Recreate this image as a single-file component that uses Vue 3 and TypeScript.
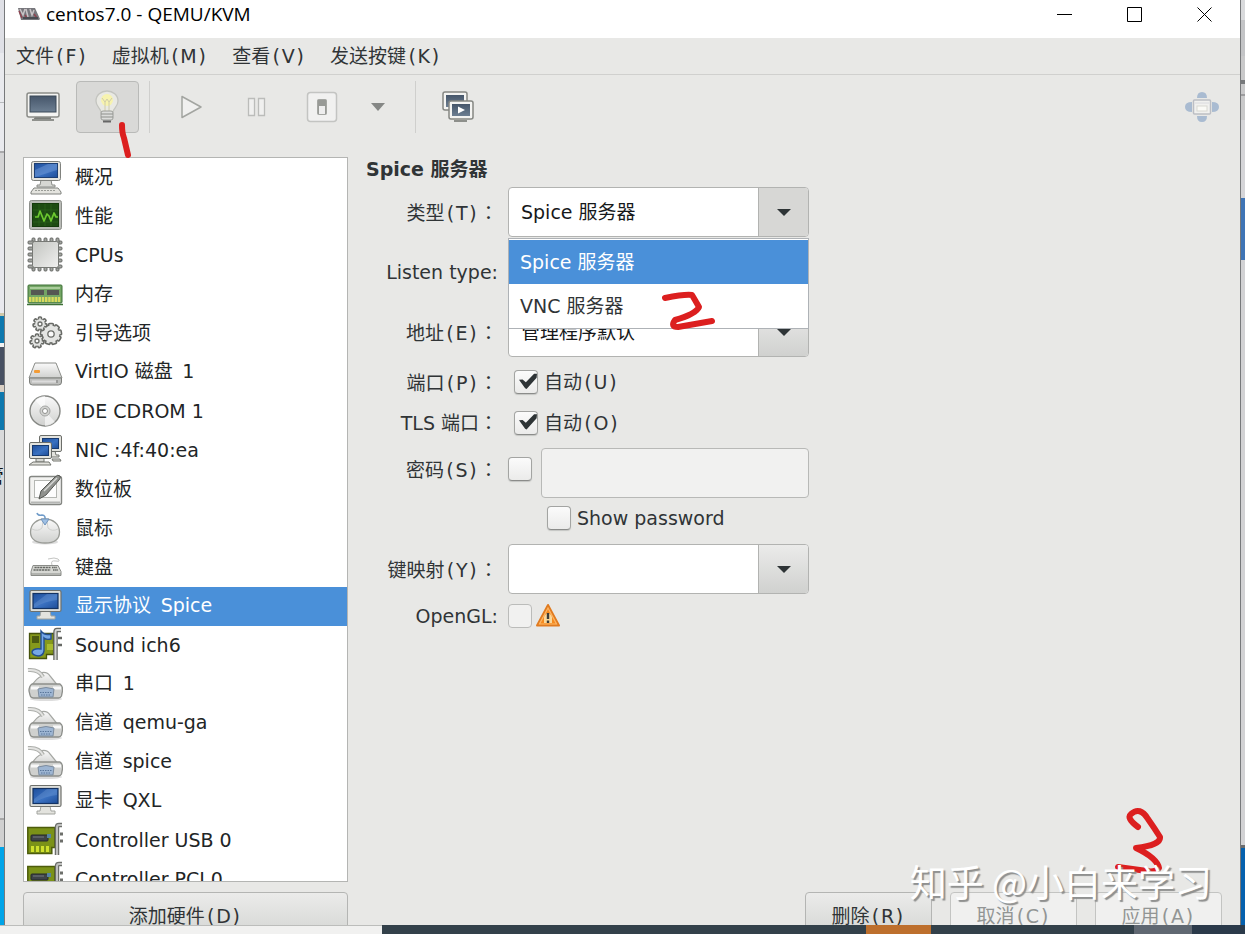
<script setup lang="ts">
import { h, ref } from 'vue'

interface Device {
  icon: string
  label: string
}

const PUNCT = /([()：]|(?<=[\u4e00-\u9fff]) )/

/** Sets brackets, wide colons and the space after Han text in their own faces. */
const Caption = (props: { text: string }) =>
  h(
    'span',
    { class: 'caption' },
    props.text
      .split(PUNCT)
      .filter((part) => part !== '')
      .map((part) => {
        if (part === '：') return h('span', { class: 'caption-colon' }, part)
        if (part === ' ') return h('span', { class: 'caption-space' }, part)
        if (part === '(' || part === ')') return h('span', { class: 'caption-mono' }, part)
        return part
      }),
  )
Caption.props = ['text']

const menus = ['文件(F)', '虚拟机(M)', '查看(V)', '发送按键(K)']

const devices: Device[] = [
  { icon: 'computer', label: '概况' },
  { icon: 'performance', label: '性能' },
  { icon: 'cpu', label: 'CPUs' },
  { icon: 'memory', label: '内存' },
  { icon: 'gears', label: '引导选项' },
  { icon: 'disk', label: 'VirtIO 磁盘 1' },
  { icon: 'cd', label: 'IDE CDROM 1' },
  { icon: 'nic', label: 'NIC :4f:40:ea' },
  { icon: 'tablet', label: '数位板' },
  { icon: 'mouse', label: '鼠标' },
  { icon: 'keyboard', label: '键盘' },
  { icon: 'display', label: '显示协议 Spice' },
  { icon: 'sound', label: 'Sound ich6' },
  { icon: 'serial', label: '串口 1' },
  { icon: 'serial', label: '信道 qemu-ga' },
  { icon: 'serial', label: '信道 spice' },
  { icon: 'display', label: '显卡 QXL' },
  { icon: 'card', label: 'Controller USB 0' },
  { icon: 'card', label: 'Controller PCI 0' },
]

const selected = ref(11)
const serverType = ref('Spice 服务器')
const serverTypes = ['Spice 服务器', 'VNC 服务器']
const address = ref('管理程序默认')
const keymap = ref('')
const password = ref('')
const autoPort = ref(true)
const autoTls = ref(true)
const usePassword = ref(false)
const showPassword = ref(false)
const openGl = ref(false)

function gear(cx: number, cy: number, r: number, teeth: number): string {
  let rects = ''
  for (let i = 0; i < teeth; i++) {
    rects += `<rect x="${cx - r / 4}" y="${cy - r - 1}" width="${r / 2}" height="${r}" rx="1" transform="rotate(${(i * 360) / teeth} ${cx} ${cy})"/>`
  }
  return `<g fill="#e4e5e3" stroke="#686a66" stroke-width="1.6">${rects}</g>
    <circle cx="${cx}" cy="${cy}" r="${r - 1.2}" fill="#e4e5e3"/>
    <circle cx="${cx}" cy="${cy}" r="${r / 3}" fill="#fafafa" stroke="#6c6e6a" stroke-width="1.3"/>`
}

function pins(): string {
  let out = ''
  for (let i = 0; i < 5; i++) {
    const p = 5 + i * 6
    out += `<rect x="${p}" y="2" width="3" height="6" rx="1"/><rect x="${p}" y="29" width="3" height="6" rx="1"/>`
    out += `<rect x="1" y="${p}" width="6" height="3" rx="1"/><rect x="29" y="${p}" width="6" height="3" rx="1"/>`
  }
  return out
}

const icons: Record<string, string> = {
  computer: `<path d="M14 22h10l1 5h3v2H10v-2h3z" fill="#d6d7d3" stroke="#8a8c88"/>
    <rect x="4.500" y="3.500" width="29" height="19" rx="2" fill="#e3e3de" stroke="#80827e"/>
    <rect x="7.500" y="5.500" width="23" height="14" fill="url(#g-screen)" stroke="#1d3f73"/>
    <path d="M8 12l13-6h9v6q-9 3-22 7z" fill="#7fa6dc" opacity=".4"/>
    <path d="M7 30h24l3 4v2H4v-2z" fill="#e4e4df" stroke="#80827e"/><path d="M8 32.500h21" stroke="#9b9d98" stroke-dasharray="2 1"/>`,
  performance: `<rect x="2.500" y="3.500" width="32" height="29" rx="2" fill="#b9bbb6" stroke="#8d8f8b"/>
    <rect x="5.500" y="6.500" width="26" height="23" fill="#1d4b12" stroke="#143a0b"/>
    <path d="M6 13h25M6 19h25M6 25h25M12 7v22M18 7v22M24 7v22" stroke="#2f6a20" stroke-width=".6"/>
    <path d="M8 20h3l2-6 4 10 3-7 2 2 2 5 3-8 2 4h2" fill="none" stroke="#6cc82f" stroke-width="1.700" stroke-linejoin="round"/>`,
  cpu: `<g fill="#a4a6a2" stroke="#5f615d" stroke-width=".9">${pins()}</g>
    <rect x="5.500" y="5.500" width="26" height="26" rx="2" fill="url(#g-chip)" stroke="#777975"/>`,
  memory: `<rect x="1" y="10" width="34" height="18" rx="1" fill="#73a565" stroke="#3e7137"/>
    <rect x="3" y="12" width="30" height="2" fill="#a9cc9a"/>
    <rect x="4" y="15" width="13" height="5" fill="#555753"/><rect x="20" y="15" width="12" height="5" fill="#555753"/>
    <path d="M2 24.500h32" stroke="#d8da5c" stroke-width="5" stroke-dasharray="2.400 .800"/>
    <path d="M0 29.500h36" stroke="#3e7137" stroke-width="1.500"/>`,
  gears: gear(24, 20, 9.5, 9) + gear(13, 10, 6, 7) + gear(10, 27, 6, 7),
  disk: `<path d="M8 10h21l6 15H2z" fill="url(#g-metal)" stroke="#8b8d89"/>
    <path d="M2.500 25h32v4q0 3-3 3h-26q-3 0-3-3z" fill="#bfc0be" stroke="#7d7f7b"/>
    <path d="M5 28.500h24" stroke="#dcdcdc" stroke-width="2"/><rect x="7" y="17" width="6" height="3" rx="1" fill="#f39c36"/><path d="M30 27v3" stroke="#777"/>`,
  cd: `<circle cx="18" cy="19" r="15" fill="url(#g-metal)" stroke="#858783" stroke-width="1.400"/>
    <path d="M18 19L8 8q5-4 10-4zM18 19l10 11q-5 4-10 4z" fill="#fff" opacity=".6"/>
    <circle cx="18" cy="19" r="5" fill="#d3d4d2" stroke="#a5a6a4"/><circle cx="18" cy="19" r="2.500" fill="#fff" stroke="#8e908c"/>`,
  nic: `<path d="M20 20h8l1 4h3v2H18z" fill="#e3e3de" stroke="#73756f"/>
    <rect x="12.500" y="4.500" width="22" height="16" rx="1.500" fill="#e3e3de" stroke="#6c6e6a"/>
    <rect x="15.500" y="7.500" width="16" height="10" fill="url(#g-screen)" stroke="#173a70"/>
    <path d="M9 27h8v4H9z" fill="#d6d7d3" stroke="#73756f"/><path d="M6 31h16l2 3H2z" fill="#e3e3de" stroke="#73756f"/>
    <rect x="2.500" y="11.500" width="22" height="16" rx="1.500" fill="#e3e3de" stroke="#6c6e6a"/>
    <rect x="5.500" y="14.500" width="16" height="10" fill="url(#g-screen)" stroke="#173a70"/><path d="M25 28h8l1 2h-8z" fill="#e3e3de" stroke="#73756f"/>`,
  tablet: `<rect x="2.500" y="6.500" width="32" height="28" rx="2" fill="#f2f2f0" stroke="#858783" stroke-width="1.400"/>
    <rect x="7.500" y="10.500" width="22" height="17" fill="#fdfdfd" stroke="#b5b7b3"/>
    <path d="M4 32.500h29" stroke="#b5b6b4" stroke-width="2"/>
    <path d="M12 29l2-8L28 7q3-3 5-1 1 2-1 4L19 25z" fill="#8f918d" stroke="#555753"/><path d="M17 21L30 8" stroke="#d8d9d7" stroke-width="1.500"/>`,
  mouse: `<path d="M10 4q1 3 5 2 4 0 3 6" fill="none" stroke="#6f9bc9" stroke-width="1.600"/>
    <ellipse cx="18" cy="33" rx="13" ry="2.500" fill="#bbb" opacity=".5"/>
    <path d="M18 10c8 0 14.500 5 14.500 13S26 34 18 34 3.500 31 3.500 23 10 10 18 10z" fill="url(#g-metal)" stroke="#9b9d98" stroke-width="1.300"/>
    <path d="M5 20q6 3 10-1l1-7M31 20q-6 3-10-1l-1-7" fill="none" stroke="#d0d1cf"/>
    <path d="M14 10l4 6 4-6z" fill="#9fc0e4" stroke="#6f93bd"/>`,
  keyboard: `<path d="M25 17q-2-5 4-4 5 1 2-2-3-2-10 0" fill="none" stroke="#c4c5c3"/>
    <path d="M6 17.500h25l3 6v4H4v-4z" fill="#d6d7d3" stroke="#8a8c88"/>
    <path d="M7.500 19.500h16M6.500 22h17" stroke="#666864" stroke-width="1.600" stroke-dasharray="2.200 .6"/><path d="M25 19.500h5M26 22h5" stroke="#666864" stroke-width="1.600" stroke-dasharray="1.600 .5"/><path d="M4 26h30" stroke="#8d8f8b"/>`,
  display: `<path d="M14 24h9l1 5h4v3H10v-3h3z" fill="#e3e3de" stroke="#a2a49f"/>
    <rect x="3" y="3.500" width="31" height="21" rx="1.500" fill="#dddeda" stroke="#6e706c" stroke-width="1.200"/>
    <rect x="6" y="6.500" width="25" height="15" fill="url(#g-screen)" stroke="#133263" stroke-width="1.200"/>
    <path d="M7 17L20 7h10v6q-12 1-23 8z" fill="#7fa6dc" opacity=".3"/>`,
  sound: `<path d="M2.500 7.500h24v21h-7v4h-17z" fill="#86991c" stroke="#46520c" stroke-width="1.300"/>
    <rect x="5" y="10" width="7" height="7" fill="#4c5a12"/><path d="M20 21h6" stroke="#a9bb30" stroke-width="6"/>
    <path d="M14 5q4 5 10 3v5q-5 1-7-1v13q-1 5-6 5-6-1-6-4 1-4 9-3z" fill="#75a7e6" stroke="#244f91" stroke-width="1.400"/>
    <path d="M34 4h-4q-1.500 0-1.500 2v28" fill="none" stroke="#666864" stroke-width="4.500"/><path d="M34 4h-4q-1.500 0-1.500 2v28" fill="none" stroke="#d2d3d1" stroke-width="2"/>
    <path d="M31 12h4M31 19h4" stroke="#666864" stroke-width="2.500"/>`,
  serial: `<ellipse cx="19" cy="34" rx="16" ry="2" fill="#aaa" opacity=".4"/>
    <path d="M13 8q7-2 10 3l9 11H4q5-9 11-11z" fill="url(#g-metal)" stroke="#a5a7a3" stroke-width="1.300"/>
    <path d="M1 5q11-1 15 7" fill="none" stroke="#adafab" stroke-width="4"/><path d="M1 5q11-1 15 7" fill="none" stroke="#e3e3e1" stroke-width="2"/>
    <path d="M5 19h28q3 2 2.500 7l-1 5q-1 2-3 2h-25q-3 0-3.500-3l-1-4q0-5 3-7z" fill="#cfd0ce" stroke="#8d8f8b" stroke-width="1.300"/>
    <path d="M4 23h8M26 23h8" stroke="#f8f8f8" stroke-width="3"/><path d="M11 24q8-3 16 0l-1 8H12z" fill="#9db5d2" stroke="#7d8c9e"/>
    <path d="M13 27.500h12M14 30h10" stroke="#5a769a" stroke-dasharray="1.500 1"/>`,
  card: `<path d="M.8 6.500h27v20h-3v6H.8z" fill="#7b9218" stroke="#4d5c0b" stroke-width="1.500"/>
    <rect x="4" y="14" width="17" height="6" rx="1" fill="#3e4347" stroke="#24282b"/><path d="M6 16h11" stroke="#747b80"/><rect x="20" y="13" width="4" height="4" fill="#5684a0"/>
    <path d="M4 28h18" stroke="#cfe02c" stroke-width="6" stroke-dasharray="3 2"/>
    <path d="M35 4h-3q-2 0-2 2v28" fill="none" stroke="#6d6f6b" stroke-width="4.500"/><path d="M35 4h-3q-2 0-2 2v28" fill="none" stroke="#bfc0be" stroke-width="2"/>
    <path d="M33 13h3M33 20h3" stroke="#6d6f6b" stroke-width="3"/>`,
}
</script>

<template>
  <div class="desktop">
    <svg class="defs" width="0" height="0" aria-hidden="true">
      <defs>
        <linearGradient id="g-screen" x1="0" y1="0" x2="1" y2="1">
          <stop offset="0" stop-color="#1f4f9c" /><stop offset=".55" stop-color="#3a71c1" /><stop offset="1" stop-color="#1e4d98" />
        </linearGradient>
        <linearGradient id="g-slate" x1="0" y1="0" x2="0" y2="1">
          <stop offset="0" stop-color="#46566a" /><stop offset="1" stop-color="#6d7f92" />
        </linearGradient>
        <linearGradient id="g-chip" x1="0" y1="0" x2="1" y2="1">
          <stop offset="0" stop-color="#c2c4c0" /><stop offset="1" stop-color="#f0f0ef" />
        </linearGradient>
        <linearGradient id="g-metal" x1="0" y1="0" x2="0" y2="1">
          <stop offset="0" stop-color="#fafafa" /><stop offset="1" stop-color="#cfd0ce" />
        </linearGradient>
      </defs>
    </svg>

    <div class="edge edge-left"><span class="edge-text" aria-hidden="true">管</span></div>

    <main class="window">
      <header class="titlebar">
        <svg class="app-icon" viewBox="0 0 24 15" aria-hidden="true">
          <path d="M1 1h17l5 11-1 1H4z" fill="#77777c" />
          <path d="M3 2l3 6 2-6M9 2l2 8M13 2l2 6 2-5" stroke="#c9c3c6" stroke-width="1.500" fill="none" />
          <path d="M2 4l3 7M8 8l2 3M17 7l3 4" stroke="#8e4451" stroke-width="1.500" />
          <path d="M6 11h15" stroke="#4a4c52" stroke-width="2" />
        </svg>
        <h1>centos7.0 - QEMU/KVM</h1>
        <button type="button" class="caption-btn" aria-label="最小化">
          <svg viewBox="0 0 16 16"><path d="M0 7.500h15" /></svg>
        </button>
        <button type="button" class="caption-btn" aria-label="最大化">
          <svg viewBox="0 0 16 16"><path d="M.5.500h14v14H.5z" /></svg>
        </button>
        <button type="button" class="caption-btn" aria-label="关闭">
          <svg viewBox="0 0 16 16"><path d="M.5.500l14 14M14.500.5l-14 14" /></svg>
        </button>
      </header>

      <nav class="menubar">
        <button v-for="m in menus" :key="m" type="button"><Caption :text="m" /></button>
      </nav>

      <div class="toolbar">
        <button type="button" aria-label="控制台">
          <svg width="36" height="32" viewBox="0 0 36 32">
            <path d="M10 26h16v3H8z" fill="#7b7d79" />
            <rect x="2" y="2" width="32" height="24" rx="2" fill="#f4f4f2" stroke="#8a8c88" stroke-width="1.500" />
            <rect x="5" y="5" width="26" height="16" fill="url(#g-slate)" stroke="#3b4856" /><path d="M7 29h22" stroke="#8f918d" stroke-width="2" />
          </svg>
        </button>
        <button type="button" class="pressed" aria-label="详情">
          <svg width="30" height="36" viewBox="0 0 30 36">
            <path d="M14 2c6 0 11 4 11 10s-4 6-5 11H8C7 18 3 18 3 12S8 2 14 2z" fill="#e9e9e3" stroke="#c3c4bf" stroke-width="1.300" />
            <circle cx="14" cy="11" r="6" fill="#f7f3ae" /><path d="M9 9l3 4 2-3 2 3 3-4M12 13v9M16 13v9" fill="none" stroke="#cfccaa" />
            <rect x="8" y="22" width="12" height="9" rx="2" fill="#dcdddb" stroke="#9c9e9a" /><path d="M8 25h12M8 28h12" stroke="#8d8f8b" /><path d="M10 32.500h8" stroke="#666" stroke-width="2" />
          </svg>
          <svg class="mark mark-one" viewBox="0 0 16 40" aria-hidden="true">
            <path d="M5 5q0 8 2 13l4 17" />
          </svg>
        </button>
        <span class="sep"></span>
        <button type="button" disabled aria-label="运行">
          <svg width="26" height="26" viewBox="0 0 26 26"><path d="M3 2.500L22 13 3 23.500z" fill="#f0f0ef" stroke="#a3a5a1" stroke-width="1.500" stroke-linejoin="round" /></svg>
        </button>
        <button type="button" disabled aria-label="暂停">
          <svg width="22" height="22" viewBox="0 0 22 22"><path d="M2.500 2.500h6v17h-6zM12.500 2.500h6v17h-6z" fill="#f0f0ef" stroke="#bbbcba" stroke-width="1.300" /></svg>
        </button>
        <button type="button" disabled aria-label="关机">
          <svg width="32" height="32" viewBox="0 0 32 32">
            <rect x="1.500" y="1.500" width="29" height="29" rx="3" fill="#f1f1f0" stroke="#c3c4c2" stroke-width="1.500" />
            <rect x="11.500" y="8.500" width="9" height="15" rx="1" fill="#989a96" stroke="#a5a7a3" /><rect x="13" y="15" width="6" height="8" fill="#eee" />
          </svg>
        </button>
        <button type="button" class="narrow" aria-label="更多关机选项">
          <svg width="16" height="10" viewBox="0 0 16 10"><path d="M1 1h14L8 9z" fill="#858785" /></svg>
        </button>
        <span class="sep"></span>
        <button type="button" aria-label="快照">
          <svg width="34" height="34" viewBox="0 0 34 34">
            <rect x="2" y="2" width="24" height="18" rx="2" fill="#f4f4f2" stroke="#858783" stroke-width="1.500" /><rect x="5" y="5" width="18" height="12" fill="url(#g-slate)" />
            <path d="M13 30h13v2H13z" fill="#8d8f8b" />
            <rect x="8" y="11" width="24" height="18" rx="2" fill="#f4f4f2" stroke="#858783" stroke-width="1.500" /><rect x="11" y="14" width="18" height="12" fill="url(#g-slate)" />
            <path d="M17 16.500l7 3.500-7 3.500z" fill="#fff" />
          </svg>
        </button>
        <span class="grow"></span>
        <button type="button" disabled aria-label="全屏">
          <svg width="36" height="34" viewBox="0 0 36 34">
            <g fill="#a9bbd1"><path d="M13 8q0-6 5-6t5 6zM13 26q0 6 5 6t5-6zM8 12q-7 0-7 5t7 5zM28 12q7 0 7 5t-7 5z" /></g>
            <rect x="9.500" y="10" width="17" height="14" rx="1" fill="#f1f1ef" stroke="#bcbec4" stroke-width="1.500" /><path d="M11 13h14" stroke="#d9dade" /><rect x="13" y="16" width="10" height="5" fill="#fafaf6" stroke="#d8d8d2" />
          </svg>
        </button>
      </div>

      <section class="content">
        <ul class="devices">
          <li v-for="(d, i) in devices" :key="d.label">
            <button type="button" :class="{ active: i === selected }" @click="selected = i">
              <svg class="dev-icon" viewBox="0 0 36 39" aria-hidden="true" v-html="icons[d.icon]"></svg>
              <span class="dev-label"><Caption :text="d.label" /></span>
            </button>
          </li>
        </ul>

        <form class="details" @submit.prevent>
          <h2>Spice 服务器</h2>
          <div class="grid">
            <label class="name" for="f-type"><Caption text="类型(T)：" /></label>
            <div class="field">
              <div class="combo open">
                <select id="f-type" v-model="serverType">
                  <option v-for="t in serverTypes" :key="t">{{ t }}</option>
                </select>
                <span class="arrow"><svg viewBox="0 0 16 9"><path d="M1 1h14L8 8z" /></svg></span>
              </div>
              <div class="popup">
                <button
                  v-for="t in serverTypes"
                  :key="t"
                  type="button"
                  :class="{ active: t === serverType }"
                  @click="serverType = t"
                >{{ t }}</button>
                <svg class="mark mark-two" viewBox="0 0 58 42" aria-hidden="true">
                  <path d="M5 8q20-4 27-3 3 5 7 12-3 7-24 13-5 7 3 7l34-6" />
                </svg>
              </div>
            </div>

            <label class="name" for="f-listen">Listen type:</label>
            <div class="combo">
              <select id="f-listen"><option></option></select>
              <span class="arrow"><svg viewBox="0 0 16 9"><path d="M1 1h14L8 8z" /></svg></span>
            </div>

            <label class="name" for="f-address"><Caption text="地址(E)：" /></label>
            <div class="combo">
              <select id="f-address" v-model="address"><option>管理程序默认</option></select>
              <span class="arrow"><svg viewBox="0 0 16 9"><path d="M1 1h14L8 8z" /></svg></span>
            </div>

            <span class="name"><Caption text="端口(P)：" /></span>
            <label class="check indent"><input v-model="autoPort" type="checkbox" /><Caption text="自动(U)" /></label>

            <span class="name"><Caption text="TLS 端口：" /></span>
            <label class="check indent"><input v-model="autoTls" type="checkbox" /><Caption text="自动(O)" /></label>

            <label class="name name-top" for="f-usepw"><Caption text="密码(S)：" /></label>
            <div class="password">
              <input id="f-usepw" v-model="usePassword" type="checkbox" />
              <input v-model="password" class="entry" type="password" aria-label="密码" :disabled="!usePassword" />
              <label class="check indent show"><input v-model="showPassword" type="checkbox" />Show password</label>
            </div>

            <label class="name" for="f-keymap"><Caption text="键映射(Y)：" /></label>
            <div class="combo">
              <select id="f-keymap" v-model="keymap"><option value=""></option></select>
              <span class="arrow"><svg viewBox="0 0 16 9"><path d="M1 1h14L8 8z" /></svg></span>
            </div>

            <label class="name" for="f-gl">OpenGL:</label>
            <div class="gl">
              <input id="f-gl" v-model="openGl" type="checkbox" disabled />
              <svg width="26" height="26" viewBox="0 0 26 26" role="img" aria-label="警告">
                <path d="M13 2L24 22.500H2z" fill="#f58a1f" stroke="#e07b20" stroke-width="2" stroke-linejoin="round" />
                <path d="M13 5l8.500 16h-17z" fill="none" stroke="#fbb567" stroke-width="1.200" />
                <path d="M9 14q4-8 8 0v6H9z" fill="#f9d79b" /><path d="M13 10v6M13 17.500v2.500" stroke="#3a3a36" stroke-width="2.400" />
              </svg>
            </div>
          </div>
        </form>
      </section>

      <footer class="actions">
        <button type="button" class="add"><Caption text="添加硬件(D)" /></button>
        <span class="grow"></span>
        <button type="button"><Caption text="删除(R)" /></button>
        <button type="button" disabled><Caption text="取消(C)" /></button>
        <button type="button" disabled><Caption text="应用(A)" /></button>
      </footer>

      <svg class="mark mark-three" viewBox="0 0 56 70" aria-hidden="true">
        <path d="M26 20Q14 11 19 7q9-8 17 5 7 10 12 18 1 8-24 11 21 10 23 20-5 5-12 3L6 60" />
      </svg>
      <p class="watermark">知乎 @小白来学习</p>
    </main>

    <div class="edge edge-right"></div>

    <div class="taskbar">
      <span class="tb-light"></span><span></span><span class="tb-orange"></span><span></span><span class="tb-grey"></span><span class="tb-end"></span>
    </div>
  </div>
</template>

<style>
body {
  margin: 0;
}
.caption {
  white-space: pre;
}
.caption-mono {
  font-family: "DejaVu Sans Mono", monospace;
  font-size: 19px;
}
.caption-space {
  font-family: "DejaVu Sans Mono", monospace;
  font-size: 16px;
}
.caption-colon {
  font-family: "Noto Sans CJK TC", sans-serif;
}
</style>

<style scoped>
.desktop {
  display: grid;
  grid-template-columns: 5px minmax(0, 1fr) 5px;
  grid-template-rows: minmax(0, 1fr) 9px;
  height: 100vh;
  overflow: hidden;
  font-family: "DejaVu Sans", "Noto Sans CJK SC", sans-serif;
  font-size: 19px;
  line-height: 24px;
  color: #303436;
}
.defs {
  position: absolute;
}
button,
select,
input {
  font: inherit;
  color: inherit;
  margin: 0;
}
button {
  border: 0;
  padding: 0;
  background: none;
}
.edge {
  overflow: hidden;
}
.edge-left {
  display: flex;
  justify-content: flex-end;
  border-right: 1px solid #77797b;
  background: linear-gradient(#dfe0e6 0 53px, #e9eaee 53px 102px, #b8babd 102px 103px, #e9eaee 103px 151px, #a9a9ab 151px 153px, #d4d4d5 153px 190px, #e9e9ee 190px 313px, #cfc8a9 313px 316px, #0e78ae 316px 343px, #f3f3f3 343px 347px, #485163 347px 385px, #d9cfc4 385px 392px, #0e78ae 392px 430px, #d9dadb 430px 818px, #a8a8a8 818px 820px, #d0d0d0 820px 847px, #00a4e8 847px);
}
.edge-text {
  margin-top: 464px;
  color: #111;
}
.edge-right {
  border-left: 1px solid #77797b;
  background: linear-gradient(#d9dadc 0 20px, #c3c4c6 20px 56px, #c9c9ca 56px 80px, #77797b 80px 84px, #c9c9ca 84px 94px, #9c9c9e 94px 96px, #c9c9ca 96px 120px, #d5d5d8 120px 198px, #3f74b5 198px 260px, #d2d2d4 260px 845px, #6c6c6e 845px 848px, #0560ad 848px);
}
.window {
  position: relative;
  display: flex;
  flex-direction: column;
  min-width: 0;
  background: #e8e8e6;
}
.titlebar {
  display: flex;
  align-items: flex-start;
  height: 38px;
  background: #fff;
  color: #000;
}
.app-icon {
  width: 24px;
  height: 15px;
  margin: 7px 5px 0 12px;
}
h1 {
  flex: 1;
  margin: 2px 0 0;
  font: 400 19px/24px "Open Sans", "Noto Sans", sans-serif;
}
.caption-btn {
  display: flex;
  align-items: center;
  justify-content: center;
  width: 70px;
  height: 30px;
}
.caption-btn svg {
  width: 16px;
  height: 16px;
  fill: none;
  stroke: #000;
}
.menubar {
  display: flex;
  gap: 24px;
  height: 36px;
  padding-left: 11px;
  border-bottom: 1px solid #d0d0ce;
}
.toolbar {
  display: flex;
  gap: 2px;
  padding: 6px 7px 0 6px;
}
.toolbar button {
  position: relative;
  display: flex;
  align-items: center;
  justify-content: center;
  width: 63px;
  height: 52px;
  border-radius: 4px;
}
.toolbar .narrow {
  width: 50px;
  padding-right: 4px;
}
.toolbar .pressed {
  border: 1px solid #b9bab8;
  background: #d9d9d7;
  box-sizing: border-box;
}
.sep {
  width: 1px;
  margin: 0 8px;
  background: #cfcfcd;
}
.grow {
  flex: 1;
}
.content {
  flex: 1;
  display: flex;
  gap: 18px;
  min-height: 0;
  padding: 24px 18px 0;
}
.devices {
  flex: none;
  width: 323px;
  margin: 0;
  padding: 0;
  list-style: none;
  overflow: hidden;
  border: 1px solid #b4b5b3;
  background: #fff;
  color: #222526;
}
.devices button {
  display: flex;
  align-items: center;
  gap: 12px;
  width: 100%;
  height: 39px;
  padding-left: 3px;
  text-align: left;
}
.devices .active {
  background: #4a90d9;
  color: #fff;
}
.dev-icon {
  width: 36px;
  height: 39px;
  flex: none;
}
.dev-label {
  padding-bottom: 2px;
}
.details {
  flex: 1;
  min-width: 0;
}
h2 {
  margin: 0 0 6px;
  font-size: 19px;
  line-height: 24px;
  font-weight: 700;
}
.grid {
  display: grid;
  grid-template-columns: 132px minmax(0, 301px);
  grid-template-rows: 50px 50px 50px 30px 31px 86px 50px 24px;
  gap: 10px;
  align-items: center;
}
.name {
  text-align: right;
  white-space: nowrap;
}
.name-top {
  align-self: start;
  padding-top: 9px;
}
.field {
  position: relative;
}
.combo {
  display: grid;
  grid-template-columns: minmax(0, 1fr) 50px;
  height: 50px;
  box-sizing: border-box;
  border: 1px solid #b2b3b1;
  border-radius: 4px;
  background: #fff;
  overflow: hidden;
}
.combo select {
  grid-area: 1 / 1 / 2 / 3;
  appearance: none;
  border: 0;
  padding: 0 50px 0 12px;
  background: none;
  color: #16181a;
}
.arrow {
  grid-area: 1 / 2;
  display: flex;
  align-items: center;
  justify-content: center;
  border-left: 1px solid #b2b3b1;
  background: linear-gradient(#ebebea, #d0d1cf);
  pointer-events: none;
}
.open .arrow {
  background: #d7d7d5;
}
.arrow svg {
  width: 16px;
  height: 9px;
  fill: #2e3436;
}
.popup {
  position: absolute;
  z-index: 2;
  top: 51px;
  left: 0;
  right: 0;
  padding-top: 1px;
  border: 1px solid #aeb2b6;
  box-sizing: border-box;
  background: #fff;
}
.popup button {
  display: block;
  width: 100%;
  height: 44px;
  padding-left: 11px;
  text-align: left;
}
.popup .active {
  background: #4a90d9;
  color: #fff;
}
.check {
  display: flex;
  align-items: center;
  gap: 6px;
}
.indent {
  padding-left: 6px;
}
input[type="checkbox"] {
  appearance: none;
  flex: none;
  width: 24px;
  height: 24px;
  box-sizing: border-box;
  border: 1px solid #a3a4a2;
  border-bottom-color: #8b8c8a;
  border-radius: 4px;
  background: linear-gradient(#fbfbfb, #ebebea);
  box-shadow: 0 1px 1px #c4c5c3;
}
input[type="checkbox"]:disabled {
  border-color: #bbbcba;
  background: #f1f1f0;
  box-shadow: none;
}
input[type="checkbox"]:checked::before {
  content: "";
  display: block;
  width: 18px;
  height: 16px;
  margin: 2px 0 0 4px;
  background: #2e3436;
  clip-path: polygon(0 42%, 20% 40%, 38% 58%, 84% 4%, 100% 4%, 98% 30%, 42% 100%, 34% 96%);
}
.password {
  display: grid;
  grid-template-columns: 24px minmax(0, 1fr);
  grid-template-rows: 50px 24px;
  gap: 8px 9px;
  align-self: start;
}
.password > input[type="checkbox"] {
  margin-top: 9px;
}
.show {
  grid-column: 2;
}
.entry {
  min-width: 0;
  box-sizing: border-box;
  border: 1px solid #b8b9b7;
  border-radius: 4px;
  padding: 0 12px;
  background: #f1f1f0;
}
.gl {
  display: flex;
  align-items: center;
  gap: 3px;
}
.actions {
  display: flex;
  gap: 18px;
  height: 33px;
  margin-top: 10px;
  padding: 0 18px;
  overflow: hidden;
}
.actions button {
  width: 127px;
  height: 48px;
  box-sizing: border-box;
  border: 1px solid #b4b5b3;
  border-radius: 4px;
  background: linear-gradient(#ebebea, #d3d4d2);
}
.actions .add {
  width: 325px;
}
.actions button:disabled {
  border-color: #c3c4c2;
  background: #f0f0ef;
  color: #929594;
}
.mark {
  position: absolute;
  fill: none;
  stroke: #dc1f1f;
  stroke-width: 6px;
  stroke-linecap: round;
  stroke-linejoin: round;
  pointer-events: none;
}
.mark-one {
  z-index: 3;
  top: 38px;
  left: 40px;
  width: 16px;
  height: 40px;
}
.mark-two {
  top: 51px;
  left: 151px;
  width: 58px;
  height: 42px;
}
.mark-three {
  right: 72px;
  bottom: 48px;
  width: 56px;
  height: 70px;
}
.watermark {
  position: absolute;
  right: 28px;
  bottom: 19px;
  margin: 0;
  font: 400 37px/50px "Noto Sans CJK SC", sans-serif;
  color: #fff;
  text-shadow: 2px 2px 1px #8e8f8e;
  pointer-events: none;
}
.taskbar {
  grid-column: 1 / -1;
  display: grid;
  grid-template-columns: 382fr 484fr 65fr 203fr 58fr 53fr;
  background: #33414a;
}
.tb-light {
  border-top: 1px solid #bcbdbb;
  background: #f1f1f0;
}
.tb-orange {
  background: #bd6f2d;
}
.tb-grey {
  background: #606872;
}
.tb-end {
  background: #2b3a4a;
}
</style>
